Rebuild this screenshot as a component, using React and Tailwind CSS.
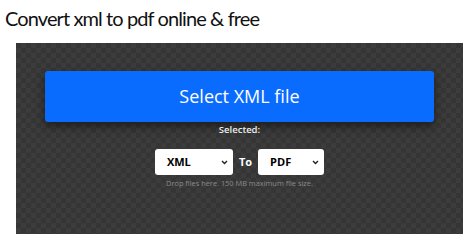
export default function App() {
  return (
    <div className="w-[474px] h-[242px] bg-white overflow-hidden" style={{ fontFamily: '"Open Sans", sans-serif' }}>
      <h1 className="pl-[5px] pt-[6px] h-[43px] text-[20px] leading-[24px] text-[#111] font-['Lato',sans-serif] font-normal tracking-[-0.9px]">
        Convert xml to pdf online &amp; free
      </h1>
      <div className="ml-[16px] w-[447px] h-[191px] bg-[#393939] bg-[repeating-conic-gradient(#3c3c3c_0%_25%,#353535_0%_50%)] bg-[length:10px_10px] flex flex-col items-center pt-[28px]">
        <button className="w-[389px] h-[51px] rounded-[3px] bg-[#0a6cff] text-white text-[18px] shadow-[0_4px_10px_rgba(0,0,0,0.5)] font-['Open_Sans',sans-serif]">
          Select XML file
        </button>
        <div className="mt-[1px] text-[9.5px] leading-[14px] font-semibold text-[#eee]">Selected:</div>
        <div className="mt-[12px] flex items-center">
          <div className="w-[78px] h-[26px] bg-white rounded-[3px] flex items-center justify-between pl-[12px] pr-[5px]">
            <span className="text-[11px] font-bold text-black">XML</span>
            <svg width="7" height="5" viewBox="0 0 7 5"><path d="M1 1l2.5 2.5L6 1" stroke="#222" strokeWidth="1.4" fill="none" /></svg>
          </div>
          <span className="mx-[6px] text-[11px] font-bold text-white">To</span>
          <div className="w-[66px] h-[26px] bg-white rounded-[3px] flex items-center justify-between pl-[12px] pr-[5px]">
            <span className="text-[11px] font-bold text-black">PDF</span>
            <svg width="7" height="5" viewBox="0 0 7 5"><path d="M1 1l2.5 2.5L6 1" stroke="#222" strokeWidth="1.4" fill="none" /></svg>
          </div>
        </div>
        <div className="mt-[1px] text-[7.4px] leading-[14px] text-[#8a8a8a]">Drop files here. 150 MB maximum file size.</div>
      </div>
    </div>
  );
}
